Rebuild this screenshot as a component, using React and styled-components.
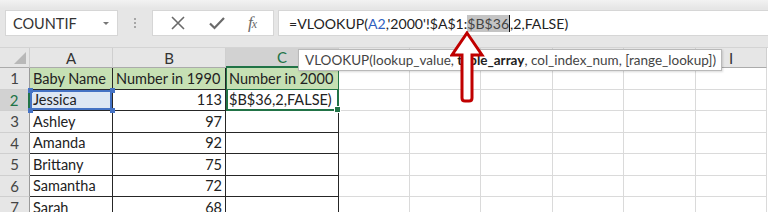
import React from "react"
import styled, { createGlobalStyle } from "styled-components"

// excel-ish formula bar + sheet, styled components

const Global = createGlobalStyle`
  * { box-sizing: border-box; }
  body {
    margin: 0;
    font-family: Lato, "Open Sans", sans-serif;
    background: #fff;
  }
`

const Screen = styled.div`
  width: 768px;
  height: 212px;
  overflow: hidden;
  position: relative;
  background: #fff;
`

const Toolbar = styled.div`
  height: 48px;
  display: flex;
  align-items: flex-start;
  padding: 10px 0 0 5px;
  background: linear-gradient(#f2f2f2 0px, #e6e6e6 8px, #e6e6e6 100%);
  border-bottom: 1px solid #d4d4d4;
`

const NameBox = styled.div`
  width: 113px;
  height: 26px;
  background: #fff;
  border: 1px solid #d6d6d6;
  display: flex;
  align-items: center;
  justify-content: space-between;
  padding: 0 8px 0 7px;
  font-size: 14.5px;
  color: #333;
`

const Caret = styled.span`
  width: 0;
  height: 0;
  border-left: 3.5px solid transparent;
  border-right: 3.5px solid transparent;
  border-top: 3.5px solid #777;
`

const Grip = styled.div`
  width: 34px;
  height: 26px;
  display: flex;
  flex-direction: column;
  align-items: center;
  justify-content: center;
  gap: 2px;
  & span {
    width: 2px;
    height: 2px;
    background: #a6a6a6;
  }
`

const FxBox = styled.div`
  width: 122px;
  height: 26px;
  background: #fff;
  border: 1px solid #d6d6d6;
  display: flex;
  align-items: center;
  justify-content: space-around;
  padding: 0 6px;
  color: #6a6a6a;
`

const Fx = styled.span`
  font-family: "Liberation Serif", serif;
  font-style: italic;
  font-size: 17px;
  color: #6a6a6a;
  letter-spacing: -1px;
  & sub {
    font-size: 12px;
    vertical-align: baseline;
  }
`

const FormulaInput = styled.div`
  flex: 1;
  height: 26px;
  margin-left: 4px;
  background: #fff;
  border: 1px solid #d6d6d6;
  border-right: none;
  display: flex;
  align-items: center;
  padding-left: 10px;
  font-size: 14.1px;
  color: #222;
  white-space: pre;
`

const Ref = styled.span`
  color: ${(p) => p.col || "inherit"};
  background: ${(p) => p.bg || "transparent"};
  border-right: ${(p) => (p.caret ? "1px solid #111" : "none")};
`

const Sheet = styled.div`
  display: grid;
  grid-template-columns: 30px 83px 113px 113px 71px 71px 72px 71px 72px 71px;
  grid-template-rows: 20px repeat(7, 21.5px);
  font-size: 14.5px;
  color: #222;
`

const Corner = styled.div`
  background: #e6e6e6;
  border-right: 1px solid #cfcfcf;
  border-bottom: 1px solid #ababab;
  position: relative;
  &::after {
    content: "";
    position: absolute;
    right: 3px;
    bottom: 3px;
    border-left: 12px solid transparent;
    border-bottom: 12px solid #b8b8b8;
  }
`

const ColHead = styled.div`
  background: ${(p) => (p.active ? "#d2d2d2" : "#e6e6e6")};
  color: ${(p) => (p.active ? "#217346" : "#333")};
  border-right: 1px solid #cfcfcf;
  border-bottom: ${(p) => (p.active ? "2px solid #217346" : "1px solid #ababab")};
  display: flex;
  align-items: center;
  justify-content: center;
  font-size: 15px;
`

const RowHead = styled.div`
  background: ${(p) => (p.active ? "#d2d2d2" : "#e6e6e6")};
  color: ${(p) => (p.active ? "#217346" : "#444")};
  border-right: ${(p) => (p.active ? "2px solid #217346" : "1px solid #9a9a9a")};
  border-bottom: 1px solid #cfcfcf;
  display: flex;
  align-items: center;
  justify-content: center;
  font-size: 15px;
`

const ring = (p) => {
  if (p.active === "edit") return "inset 2px 0 0 #217346, inset -1px -1px 0 #217346"
  if (p.active === "col") return "inset 1px 0 0 #217346"
  if (p.range) return "inset 0 0 0 2px #4472c4"
  return "none"
}

const Cell = styled.div`
  position: relative;
  display: flex;
  align-items: center;
  justify-content: ${(p) => (p.num ? "flex-end" : "flex-start")};
  padding: 0 3px;
  white-space: nowrap;
  background: ${(p) => (p.head ? "#c6e0b4" : p.range ? "#dde7f4" : "#fff")};
  border-right: 1px solid
    ${(p) => (p.active ? "#217346" : p.boxed ? "#262626" : "#dadada")};
  border-bottom: 1px solid
    ${(p) => (p.active ? "#217346" : p.boxed ? "#262626" : "#dadada")};
  box-shadow: ${ring};

  ${(p) =>
    p.active === "edit" &&
    `&::after {
      content: "";
      position: absolute;
      right: -3px;
      bottom: -3px;
      width: 5px;
      height: 5px;
      background: #217346;
      border: 1px solid #fff;
      z-index: 2;
    }`}

  ${(p) =>
    p.range &&
    `&::before, &::after {
      content: "";
      position: absolute;
      width: 5px;
      height: 5px;
      background: #4472c4;
      z-index: 2;
    }
    &::before { left: -2px; top: -2px; }
    &::after { right: -3px; bottom: -3px; }`}
`

const Handle = styled.span`
  position: absolute;
  width: 5px;
  height: 5px;
  background: #4472c4;
  z-index: 2;
  ${(p) => (p.side === "tr" ? "right: -3px; top: -2px;" : "left: -2px; bottom: -3px;")}
`

const Tip = styled.div`
  position: absolute;
  left: 298px;
  top: 49px;
  width: 424px;
  height: 22px;
  background: #fff;
  border: 1px solid #b9b9b9;
  box-shadow: 1px 1px 2px rgba(0, 0, 0, 0.15);
  display: flex;
  align-items: center;
  padding-left: 6px;
  font-size: 13.5px;
  color: #444;
  white-space: pre;
  z-index: 5;
  & b {
    color: #222;
  }
`

const Arrow = styled.svg`
  position: absolute;
  left: 450px;
  top: 31px;
  z-index: 6;
`

const columns = ["A", "B", "C", "", "", "", "", "", "I"]

const rows = [
  ["Baby Name", "Number in 1990", "Number in 2000"],
  ["Jessica", "113", "$B$36,2,FALSE)"],
  ["Ashley", "97", ""],
  ["Amanda", "92", ""],
  ["Brittany", "75", ""],
  ["Samantha", "72", ""],
  ["Sarah", "68", ""],
]

function App() {
  return (
    <>
      <Global />
      <Screen>
        <Toolbar>
          <NameBox>
            COUNTIF
            <Caret />
          </NameBox>
          <Grip>
            <span />
            <span />
            <span />
          </Grip>
          <FxBox>
            <svg width="16" height="16" viewBox="0 0 16 16">
              <path d="M2 2 L14 14 M14 2 L2 14" stroke="#6a6a6a" strokeWidth="1.6" />
            </svg>
            <svg width="18" height="16" viewBox="0 0 18 16">
              <path d="M2 8.5 L6.5 13 L16 3" fill="none" stroke="#6a6a6a" strokeWidth="2.2" />
            </svg>
            <Fx>
              f<sub>x</sub>
            </Fx>
          </FxBox>
          <FormulaInput>
            =VLOOKUP(<Ref col="#2f5fbf">A2</Ref>,'2000'!$A$1:
            <Ref bg="#c4c4c4" col="#444" caret>
              $B$36
            </Ref>
            ,2,FALSE)
          </FormulaInput>
        </Toolbar>

        <Sheet>
          <Corner />
          {columns.map((c, k) => (
            <ColHead key={k} active={c === "C"}>
              {c}
            </ColHead>
          ))}

          {rows.map((r, i) => (
            <React.Fragment key={i}>
              <RowHead active={i === 1}>{i + 1}</RowHead>
              {r.map((v, j) => (
                <Cell
                  key={j}
                  boxed
                  head={i === 0}
                  num={j === 1 && i > 0}
                  range={i === 1 && j === 0}
                  active={j === 2 && i === 1 ? "edit" : j === 2 && i === 0 ? "col" : undefined}
                >
                  {i === 1 && j === 0 && (
                    <>
                      <Handle side="tr" />
                      <Handle side="bl" />
                    </>
                  )}
                  {v}
                </Cell>
              ))}
              {columns.slice(3).map((c, k) => (
                <Cell key={k} />
              ))}
            </React.Fragment>
          ))}
        </Sheet>

        <Tip>
          VLOOKUP(lookup_value, <b>table_array</b>, col_index_num, [range_lookup])
        </Tip>

        <Arrow width="36" height="72" viewBox="0 0 36 72">
          <path
            d="M17 2 L32 24 L22 24 L22 67 Q22 70 19 70 L15 70 Q12 70 12 67 L12 24 L2 24 Z"
            fill="#fff"
            stroke="#c00000"
            strokeWidth="3"
            strokeLinejoin="miter"
          />
        </Arrow>
      </Screen>
    </>
  )
}

export default App
